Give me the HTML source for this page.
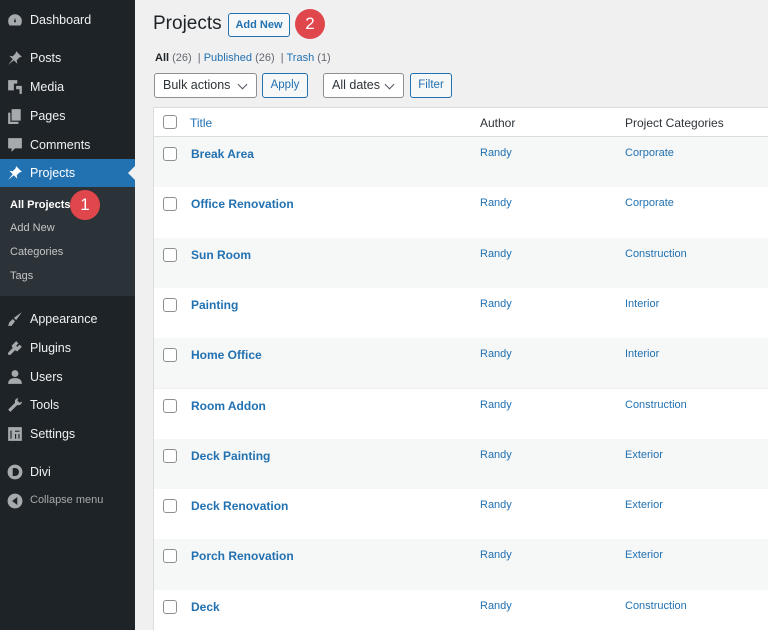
<!DOCTYPE html>
<html style="overflow:hidden;width:768px;height:630px"><head><meta charset="utf-8"><style>
*{margin:0;padding:0;box-sizing:border-box}
body{width:768px;height:630px;overflow:hidden;background:#f0f0f1;font-family:"Liberation Sans",sans-serif;font-size:12px;position:relative}
.a{position:absolute}
#sb{left:0;top:0;width:135px;height:630px;background:#1d2327}
.mi{position:absolute;left:30px;color:#f0f0f1;font-size:12.5px}
.ic{position:absolute;left:7px;width:16px;height:16px;fill:#a7aaad}
.sub{position:absolute;left:10px;color:#c3c4c7;font-size:11px}
.row{position:absolute;left:153px;width:615px;height:50.3px}
.cb{position:absolute;left:10px;top:10px;width:14px;height:14px;border:1px solid #8c8f94;border-radius:3px;background:#fff}
.t{position:absolute;left:38px;top:10px;color:#2271b1;font-weight:bold;font-size:12px}
.au{position:absolute;left:327px;top:10px;color:#2271b1;font-size:11px}
.ca{position:absolute;left:472px;top:10px;color:#2271b1;font-size:11px}
.btn{position:absolute;border:1px solid #2271b1;border-radius:3px;color:#2271b1;background:#f6f7f7;font-size:11.5px;text-align:center;line-height:23px}
.sel{position:absolute;border:1px solid #8c8f94;border-radius:3px;background:#fff;color:#2c3338;font-size:12.5px;line-height:23px;padding-left:8px}
.sel:after{content:"";position:absolute;right:10px;top:7px;width:6px;height:6px;border-right:1.5px solid #50575e;border-bottom:1.5px solid #50575e;transform:rotate(45deg)}
.badge{position:absolute;border-radius:50%;background:#e0474c;color:#fff;font-size:17px;text-align:center}
</style></head><body>
<div id="sb" class="a">
 <svg class="ic" style="top:12px" viewBox="0 0 14 14"><path d="M7 2a6 6 0 0 0-6 6c0 1.5.5 2.8 1.3 3.8h9.4A6 6 0 0 0 13 8a6 6 0 0 0-6-6zm0 3l1 4H6z"/></svg>
 <div class="mi" style="top:13px">Dashboard</div>
 <svg class="ic" style="top:50px" viewBox="0 0 14 14"><path d="M8 1l5 5-2 .5-2.5 2.5.5 3-4-4-4 5 5-4-4-4 3 .5L7.5 3z"/></svg>
 <div class="mi" style="top:51px">Posts</div>
 <svg class="ic" style="top:79px" viewBox="0 0 14 14"><path d="M1 1h8v3h-3v6H1zM8 6h5v7h-2v-4H8z"/></svg>
 <div class="mi" style="top:80px">Media</div>
 <svg class="ic" style="top:108px" viewBox="0 0 14 14"><path d="M4 1h8v10H4zM1 4h2v8h7v2H1z"/></svg>
 <div class="mi" style="top:109px">Pages</div>
 <svg class="ic" style="top:137px" viewBox="0 0 14 14"><path d="M1 1h12v9H7l-3 3v-3H1z"/></svg>
 <div class="mi" style="top:138px">Comments</div>
 <div class="a" style="left:0;top:159px;width:135px;height:28px;background:#2271b1"></div>
 <div class="a" style="left:128px;top:166px;width:0;height:0;border-top:7px solid transparent;border-bottom:7px solid transparent;border-right:7px solid #f0f0f1"></div>
 <svg class="ic" style="top:165px;fill:#fff" viewBox="0 0 14 14"><path d="M8 1l5 5-2 .5-2.5 2.5.5 3-4-4-4 5 5-4-4-4 3 .5L7.5 3z"/></svg>
 <div class="mi" style="top:166px;color:#fff">Projects</div>
 <div class="a" style="left:0;top:187px;width:135px;height:109px;background:#2c3338"></div>
 <div class="sub" style="top:199px;color:#fff;font-weight:bold">All Projects</div>
 <div class="badge" style="left:70px;top:190px;width:30px;height:30px;line-height:30px">1</div>
 <div class="sub" style="top:222px">Add New</div>
 <div class="sub" style="top:246px">Categories</div>
 <div class="sub" style="top:270px">Tags</div>
 <svg class="ic" style="top:311px" viewBox="0 0 14 14"><path d="M13 1L6 6l2 2 5-7zM5 7l2 2-3 4H1l1-3z"/></svg>
 <div class="mi" style="top:312px">Appearance</div>
 <svg class="ic" style="top:340px" viewBox="0 0 14 14"><path d="M8 1l2 2-2 2 1 1 2-2 2 2-4 4-2-1-4 4H1v-2l4-4-1-2z"/></svg>
 <div class="mi" style="top:341px">Plugins</div>
 <svg class="ic" style="top:369px" viewBox="0 0 14 14"><circle cx="7" cy="4" r="3"/><path d="M1 13c0-4 3-5 6-5s6 1 6 5z"/></svg>
 <div class="mi" style="top:370px">Users</div>
 <svg class="ic" style="top:397px" viewBox="0 0 14 14"><path d="M10 1a3 3 0 0 0-3 4L1 11l2 2 6-6a3 3 0 0 0 4-3l-2 1-2-2z"/></svg>
 <div class="mi" style="top:398px">Tools</div>
 <svg class="ic" style="top:426px" viewBox="0 0 14 14"><path d="M1 1h12v12H1zm2 3v7h1V4zm4 0v1h4V4zm0 3v4h1V7zm3 0v4h1V7z"/></svg>
 <div class="mi" style="top:427px">Settings</div>
 <svg class="ic" style="top:464px" viewBox="0 0 14 14"><circle cx="7" cy="7" r="6.5"/><path d="M5 3.5h2a3.5 3.5 0 0 1 0 7H5z" fill="#1d2327"/></svg>
 <div class="mi" style="top:465px">Divi</div>
 <svg class="ic" style="top:493px" viewBox="0 0 14 14"><circle cx="7" cy="7" r="6.5"/><path d="M9 3.5v7L4.5 7z" fill="#1d2327"/></svg>
 <div class="mi" style="top:494px;color:#a7aaad;font-size:11px">Collapse menu</div>
</div>

<div class="a" style="left:153px;top:13px;font-size:19px;color:#1d2327">Projects</div>
<div class="btn" style="left:228px;top:13px;width:62px;height:24px;font-weight:bold;font-size:11px;line-height:22px">Add New</div>
<div class="badge" style="left:295px;top:9px;width:30px;height:30px;line-height:30px">2</div>
<div class="a" style="left:155px;top:52px;font-size:11px;color:#646970"><b style="color:#1d2327">All</b> (26) &nbsp;| <span style="color:#2271b1">Published</span> (26) &nbsp;| <span style="color:#2271b1">Trash</span> (1)</div>
<div class="sel" style="left:154px;top:73px;width:103px;height:25px">Bulk actions</div>
<div class="btn" style="left:262px;top:73px;width:46px;height:25px">Apply</div>
<div class="sel" style="left:323px;top:73px;width:81px;height:25px">All dates</div>
<div class="btn" style="left:410px;top:73px;width:42px;height:25px">Filter</div>

<div class="a" style="left:153px;top:107px;width:615px;height:30px;background:#fff;border:1px solid #dcdcde;border-right:none">
 <div class="cb" style="top:7px;left:9px"></div>
 <div class="a" style="left:36px;top:8px;color:#2271b1;font-size:12px">Title</div>
 <div class="a" style="left:326px;top:8px;color:#2c3338;font-size:12px">Author</div>
 <div class="a" style="left:471px;top:8px;color:#2c3338;font-size:12px">Project Categories</div>
</div>

<div class="row" style="top:137px;background:#f6f7f7"><div class="cb"></div><div class="t">Break Area</div><div class="au">Randy</div><div class="ca">Corporate</div></div>
<div class="row" style="top:187.3px;background:#fff"><div class="cb"></div><div class="t">Office Renovation</div><div class="au">Randy</div><div class="ca">Corporate</div></div>
<div class="row" style="top:237.6px;background:#f6f7f7"><div class="cb"></div><div class="t">Sun Room</div><div class="au">Randy</div><div class="ca">Construction</div></div>
<div class="row" style="top:287.9px;background:#fff"><div class="cb"></div><div class="t">Painting</div><div class="au">Randy</div><div class="ca">Interior</div></div>
<div class="row" style="top:338.2px;background:#f6f7f7"><div class="cb"></div><div class="t">Home Office</div><div class="au">Randy</div><div class="ca">Interior</div></div>
<div class="row" style="top:388.5px;background:#fff"><div class="cb"></div><div class="t">Room Addon</div><div class="au">Randy</div><div class="ca">Construction</div></div>
<div class="row" style="top:438.8px;background:#f6f7f7"><div class="cb"></div><div class="t">Deck Painting</div><div class="au">Randy</div><div class="ca">Exterior</div></div>
<div class="row" style="top:489.1px;background:#fff"><div class="cb"></div><div class="t">Deck Renovation</div><div class="au">Randy</div><div class="ca">Exterior</div></div>
<div class="row" style="top:539.4px;background:#f6f7f7"><div class="cb"></div><div class="t">Porch Renovation</div><div class="au">Randy</div><div class="ca">Exterior</div></div>
<div class="row" style="top:589.7px;height:40.3px;background:#fff"><div class="cb"></div><div class="t">Deck</div><div class="au">Randy</div><div class="ca">Construction</div></div>
<div class="a" style="left:153px;top:137px;width:1px;height:493px;background:#dcdcde"></div>
</body></html>
